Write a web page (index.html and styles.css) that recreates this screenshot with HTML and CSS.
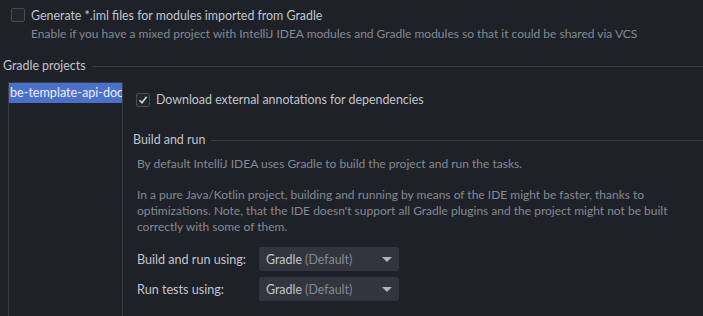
FILE: index.html
```html
<!DOCTYPE html>
<html>
<head>
<meta charset="utf-8">
<link rel="stylesheet" href="styles.css">
</head>
<body>
<div class="page">
  <div class="opt">
    <span class="cb"></span>
    <div class="opt-text">
      <div class="label">Generate *.iml files for modules imported from Gradle</div>
      <div class="hint">Enable if you have a mixed project with IntelliJ IDEA modules and Gradle modules so that it could be shared via VCS</div>
    </div>
  </div>
  <div class="sep sep-top"><span class="sep-title">Gradle projects</span><span class="sep-line"></span></div>
  <div class="main">
    <div class="list">
      <div class="item">be-template-api-doc</div>
    </div>
    <div class="panel">
      <div class="opt opt2">
        <span class="cb checked"><svg width="12" height="12" viewBox="0 0 12 12"><path d="M2.5 6.2 L5 8.7 L9.6 2.8" fill="none" stroke="#cfd1d6" stroke-width="1.6"/></svg></span>
        <span class="label">Download external annotations for dependencies</span>
      </div>
      <div class="sep sep-build"><span class="sep-title">Build and run</span><span class="sep-line"></span></div>
      <div class="desc">
        <p>By default IntelliJ IDEA uses Gradle to build the project and run the tasks.</p>
        <p>In a pure Java/Kotlin project, building and running by means of the IDE might be faster, thanks to optimizations. Note, that the IDE doesn't support all Gradle plugins and the project might not be built correctly with some of them.</p>
      </div>
      <div class="form">
        <span class="flabel">Build and run using:</span>
        <div class="combo"><span>Gradle <em>(Default)</em></span><span class="arrow"></span></div>
        <span class="flabel">Run tests using:</span>
        <div class="combo"><span>Gradle <em>(Default)</em></span><span class="arrow"></span></div>
      </div>
    </div>
  </div>
</div>
</body>
</html>
```
FILE: styles.css
```css
html, body {
  margin: 0;
  padding: 0;
  background: #1e2128;
  width: 703px;
  height: 316px;
  overflow: hidden;
}
.page {
  font-family: Lato, "Noto Sans", sans-serif;
  color: #c3c5cb;
  font-size: 12.4px;
}
.opt {
  display: flex;
  align-items: flex-start;
  padding: 8px 0 0 11px;
}
.cb {
  flex: none;
  width: 12px;
  height: 12px;
  border: 1px solid #474b53;
  border-radius: 2px;
  background: #23262d;
  margin-right: 6px;
  display: flex;
  align-items: center;
  justify-content: center;
}
.label {
  line-height: 16px;
}
.hint {
  color: #868a92;
  font-size: 12px;
  line-height: 16px;
  margin-top: 2px;
}
.sep {
  display: flex;
  align-items: center;
}
.sep-top {
  margin-top: 15px;
  padding-left: 3px;
  height: 18px;
}
.sep-title {
  margin-right: 6px;
  line-height: 18px;
}
.sep-line {
  flex: 1;
  height: 1px;
  background: #383b41;
}
.main {
  display: flex;
  margin-top: 7px;
  padding-left: 8px;
}
.list {
  width: 113px;
  height: 240px;
  border: 1px solid #383b41;
  border-bottom: none;
  overflow: hidden;
  flex: none;
}
.item {
  background: #4b70cb;
  color: #eceef3;
  line-height: 20px;
  font-size: 12.6px;
  white-space: nowrap;
  overflow: hidden;
  padding-left: 1px;
}
.panel {
  flex: 1;
  padding-left: 13px;
}
.opt2 {
  padding: 10px 0 0 0;
  align-items: center;
}
.sep-build {
  margin-top: 23px;
  height: 18px;
  margin-left: -3px;
}
.desc {
  color: #868a92;
  font-size: 12px;
  line-height: 16px;
  padding-left: 1px;
  margin-top: 7px;
  padding-right: 10px;
}
.desc p {
  margin: 0 0 15px 0;
}
.desc p:last-child {
  margin-bottom: 0;
}
.form {
  display: grid;
  grid-template-columns: 122px 140px;
  grid-auto-rows: 24px;
  row-gap: 6px;
  align-items: center;
  padding-left: 1px;
  margin-top: 12px;
}
.flabel {
  font-size: 12.6px;
}
.combo {
  height: 24px;
  background: #32353d;
  border-radius: 3px;
  display: flex;
  align-items: center;
  justify-content: space-between;
  padding: 0 7px 0 7px;
  box-sizing: border-box;
}
.combo em {
  font-style: normal;
  color: #868a91;
}
.arrow {
  width: 0;
  height: 0;
  border-left: 5px solid transparent;
  border-right: 5px solid transparent;
  border-top: 5px solid #b0b3b9;
}
```
